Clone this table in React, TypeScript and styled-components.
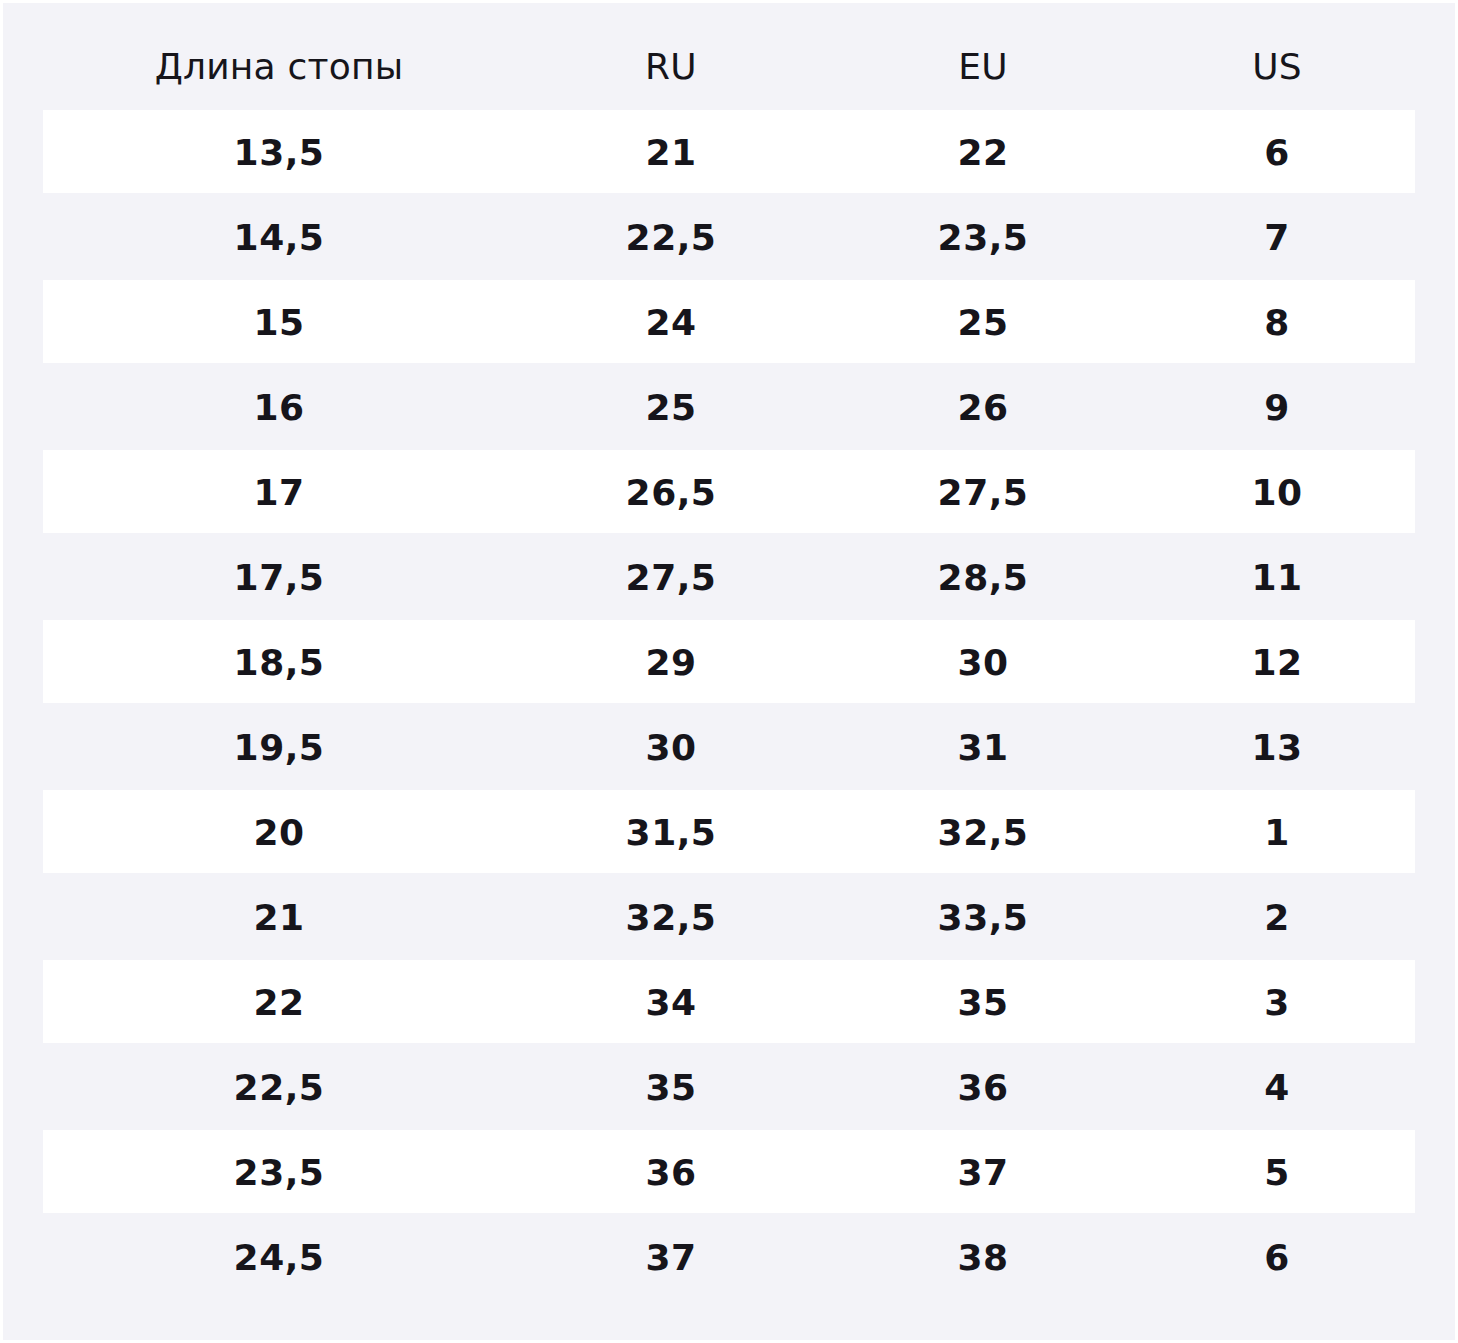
import React from "react";
import styled, { createGlobalStyle } from "styled-components";

const Global = createGlobalStyle`
  html, body { margin: 0; padding: 0; background: #ffffff; }
  body { font-family: "DejaVu Sans", "Noto Sans", sans-serif; }
`;

const Page = styled.div`
  padding: 3px;
  width: 1452px;
`;

const Panel = styled.div`
  background: #f3f3f8;
  padding: 20px 40px 40px;
  height: 1337px;
  box-sizing: border-box;
`;

const Row = styled.div<{ $white?: boolean; $header?: boolean }>`
  display: grid;
  grid-template-columns: 472px 312px 312px 276px;
  align-items: center;
  height: ${(p) => (p.$white ? 83 : 87)}px;
  padding-top: ${(p) => (p.$header ? 0 : 2)}px;
  box-sizing: border-box;
  background: ${(p) => (p.$white ? "#ffffff" : "transparent")};
  color: #16151b;
  font-size: 36px;
  font-weight: ${(p) => (p.$header ? 400 : 700)};
  letter-spacing: ${(p) => (p.$header ? "0.2px" : "0.5px")};
`;

const Cell = styled.div`
  text-align: center;
  line-height: 1;
`;

const data: string[][] = [
  ["13,5", "21", "22", "6"],
  ["14,5", "22,5", "23,5", "7"],
  ["15", "24", "25", "8"],
  ["16", "25", "26", "9"],
  ["17", "26,5", "27,5", "10"],
  ["17,5", "27,5", "28,5", "11"],
  ["18,5", "29", "30", "12"],
  ["19,5", "30", "31", "13"],
  ["20", "31,5", "32,5", "1"],
  ["21", "32,5", "33,5", "2"],
  ["22", "34", "35", "3"],
  ["22,5", "35", "36", "4"],
  ["23,5", "36", "37", "5"],
  ["24,5", "37", "38", "6"],
];

export default function App() {
  return (
    <Page>
      <Global />
      <Panel>
        <Row $header>
          <Cell>Длина стопы</Cell>
          <Cell>RU</Cell>
          <Cell>EU</Cell>
          <Cell>US</Cell>
        </Row>
        {data.map((r, i) => (
          <Row key={i} $white={i % 2 === 0}>
            {r.map((c, j) => (
              <Cell key={j}>{c}</Cell>
            ))}
          </Row>
        ))}
      </Panel>
    </Page>
  );
}
